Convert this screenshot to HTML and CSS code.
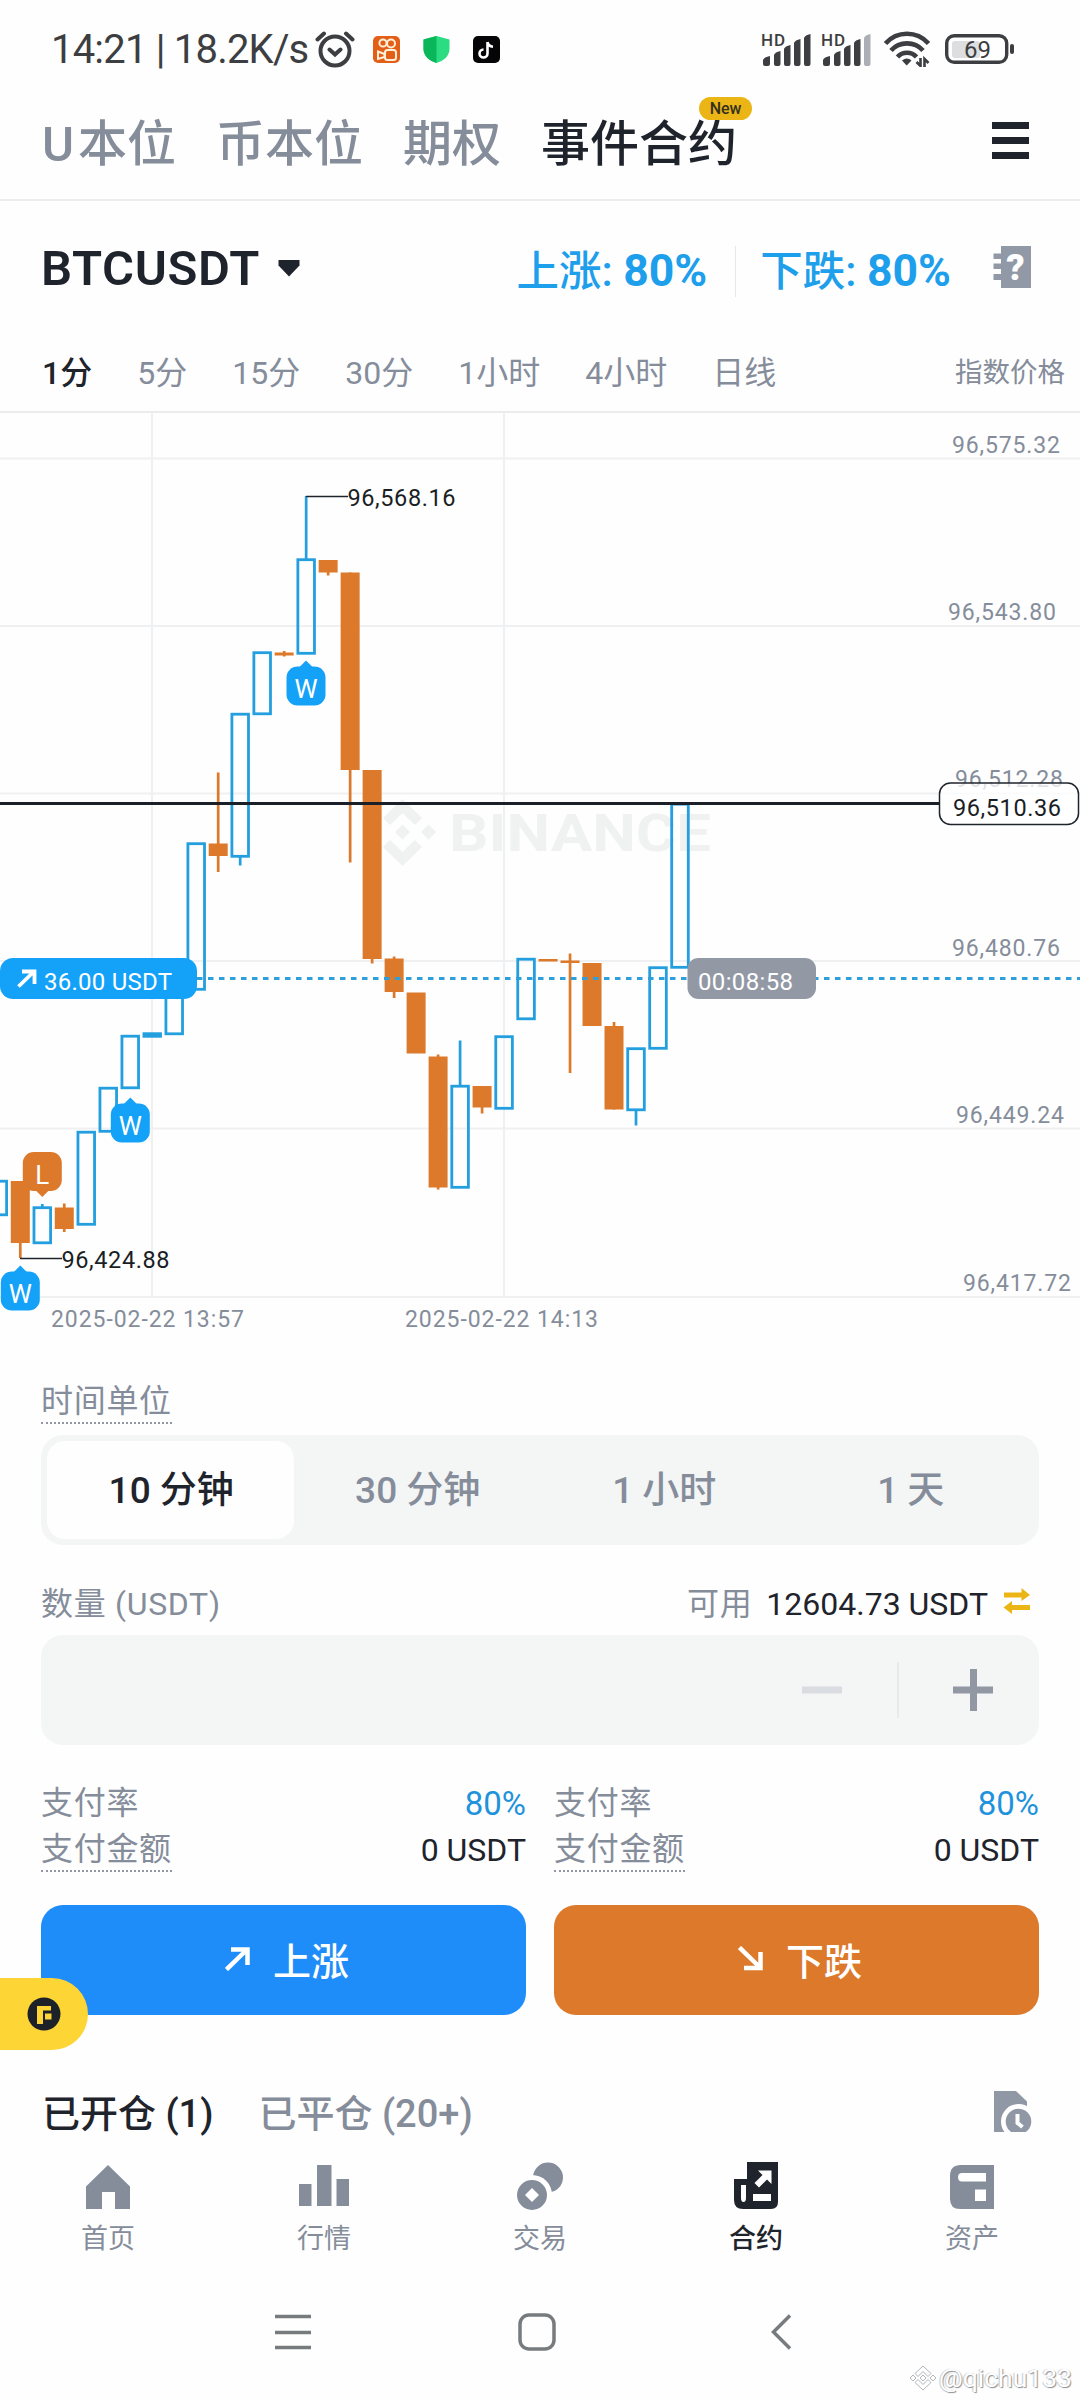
FILE: index.html
```html
<!DOCTYPE html>
<html lang="zh-CN">
<head>
    <meta charset="UTF-8">
    <meta name="viewport" content="width=device-width, initial-scale=1.0">
    <title>事件合约 BTCUSDT</title>
    <link rel="stylesheet" href="styles.css">
</head>
<body>
    <div class="status-bar">
        <span class="status-time">14:21 | 18.2K/s</span>
        <svg class="icon-alarm" width="40" height="38" viewBox="0 0 40 38" fill="none" stroke="#3d3e41" stroke-width="4" stroke-linecap="round">
            <circle cx="20" cy="21" r="14.5"/>
            <path d="M14.5 19.5l5.5 5 5.5-5M2.5 9.5L9 3.5M37.5 9.5L31 3.5"/>
        </svg>
        <svg class="icon-app" width="27" height="27" viewBox="0 0 27 27">
            <rect width="27" height="27" rx="5" fill="#e35f18"/>
            <g fill="none" stroke="#fff0d8" stroke-width="2">
                <circle cx="10" cy="7" r="3.6"/>
                <circle cx="18" cy="7.5" r="4"/>
                <rect x="12" y="14" width="11" height="10" rx="2.5"/>
                <path d="M11.5 18L5 15.5v7.500L11.500 21z"/>
            </g>
        </svg>
        <svg class="icon-app" width="27" height="27" viewBox="0 0 27 27">
            <path d="M13.500 0L26.500 3.500V13c0 7-6 12-13 14C6.500 25 .500 20 .500 13V3.500z" fill="#2bdc82"/>
            <path d="M13.500 0v27C6.500 25 .500 20 .500 13V3.500z" fill="#09b659"/>
        </svg>
        <svg class="icon-app" width="27" height="27" viewBox="0 0 27 27">
            <rect width="27" height="27" rx="5" fill="#050507"/>
            <path d="M14.500 6v11.500a4 4 0 1 1-4-4M14.500 6c.5 3 2.500 4.500 5.500 4.700" fill="none" stroke="#fff" stroke-width="2.600"/>
        </svg>
        <div class="status-right">
            <svg width="52" height="36" viewBox="0 0 52 36" fill="#3d3e41">
                <text class="hd" x="0" y="15" textLength="24">HD</text>
                <path d="M2 33v-4q1-3 7-4v8q0 2-2 2h-3q-2 0-2-2zM13 33v-9q1-3 6.500-4v13q0 2-2 2h-2.500q-2 0-2-2zM23 33v-15q1-3 6.500-4v19q0 2-2 2h-2.500q-2 0-2-2zM33 33v-21q1-3 6.500-4v25q0 2-2 2h-2.500q-2 0-2-2zM43 33v-26q1-3 6.500-4v30q0 2-2 2h-2.500q-2 0-2-2z"/>
            </svg>
            <svg class="signal-2" width="52" height="36" viewBox="0 0 52 36" fill="#3d3e41">
                <text class="hd" x="0" y="15" textLength="24">HD</text>
                <path d="M2 33v-4q1-3 7-4v8q0 2-2 2h-3q-2 0-2-2zM13 33v-9q1-3 6.500-4v13q0 2-2 2h-2.500q-2 0-2-2zM23 33v-15q1-3 6.500-4v19q0 2-2 2h-2.500q-2 0-2-2zM33 33v-21q1-3 6.500-4v25q0 2-2 2h-2.500q-2 0-2-2z"/>
                <path fill="#abaeb4" d="M43 33v-26q1-3 6.500-4v30q0 2-2 2h-2.500q-2 0-2-2z"/>
            </svg>
            <svg class="icon-wifi" width="46" height="36" viewBox="0 0 46 36" fill="none" stroke="#3d3e41" stroke-width="4.600">
                <path d="M1.500 12.500C13-.500 33-.500 44.500 12.500M7 19.500c8.500-9.500 23.500-9.500 32 0M13.500 26c5-5.700 14-5.700 19 0"/>
                <path d="M18 29.500q5-4 9.500 0L22.700 34.500z" fill="#3d3e41" stroke="none"/>
                <path d="M36.500 27v8l-4-4M40.500 36v-8l4 4" stroke-width="2.600"/>
            </svg>
            <svg width="70" height="30" viewBox="0 0 70 30">
                <rect x="7" y="7" width="28" height="17" rx="3" fill="#dcdee0"/>
                <rect x="1.700" y="1.700" width="60" height="26.600" rx="7.500" fill="none" stroke="#3d3e41" stroke-width="3.400"/>
                <rect x="65" y="10" width="4" height="10" rx="2" fill="#3d3e41"/>
                <text x="19" y="23.500" class="battery-text" textLength="27">69</text>
            </svg>
        </div>
    </div>

    <div class="top-nav">
        <span class="top-tab tab-u">U本位</span>
        <span class="top-tab">币本位</span>
        <span class="top-tab">期权</span>
        <span class="top-tab active">事件合约<span class="badge-new">New</span></span>
        <div class="menu"><i></i><i></i><i></i></div>
    </div>

    <div class="pair-row">
        <span class="pair">BTCUSDT</span>
        <svg width="22" height="17" viewBox="0 0 22 17"><path d="M.5 0h21v5.500L11 16.500.5 5.500z" fill="#1f242c"/></svg>
        <div class="rates">
            <span>上涨: <b>80%</b></span>
            <span class="rate-down">下跌: <b>80%</b></span>
        </div>
        <svg class="icon-guide" width="38" height="42" viewBox="0 0 38 42">
            <path d="M8 0h30v42H8v-8H.5v-6H8v-5H.5v-5.500H8V13H.5V7.500H8z" fill="#9299a6"/>
            <text x="22.500" y="34" class="guide-mark">?</text>
        </svg>
    </div>

    <div class="interval-row">
        <span class="interval active">1分</span>
        <span class="interval">5分</span>
        <span class="interval">15分</span>
        <span class="interval">30分</span>
        <span class="interval">1小时</span>
        <span class="interval">4小时</span>
        <span class="interval">日线</span>
        <span class="index-price">指数价格</span>
    </div>

    <svg class="chart" width="1080" height="940" viewBox="0 413 1080 940">
        <path class="grid" d="M0 458.500H1080M0 626H1080M0 793.500H1080M0 961H1080M0 1128.500H1080M0 1297H1080M152 413V1297M504 413V1297"/>
        <g class="brand" fill="#f0f1f1">
            <path d="M402.500 799l19.500 19-7 7-12.500-12-12.500 12-7-7zM402.500 866l19.500-19-7-7-12.500 12-12.500-12-7 7zM402.500 824.500l7.500 7.500-7.500 7.500-7.500-7.500zM428.500 824.500l7.500 7.500-7.500 7.500-7.500-7.500z"/>
            <text class="brand-text" x="449" y="850.500" textLength="262" lengthAdjust="spacingAndGlyphs">BINANCE</text>
        </g>
        <g class="axis">
            <text x="952" y="453" textLength="108">96,575.32</text>
            <text x="948" y="620" textLength="108">96,543.80</text>
            <text x="955" y="787" textLength="108">96,512.28</text>
            <text x="952" y="956" textLength="108">96,480.76</text>
            <text x="956" y="1123" textLength="108">96,449.24</text>
            <text x="963" y="1291" textLength="108">96,417.72</text>
            <text x="51" y="1326.500" textLength="193">2025-02-22 13:57</text>
            <text x="405" y="1326.500" textLength="193">2025-02-22 14:13</text>
        </g>

        <g id="candles"></g>

        <path class="leader" d="M306 496.500H348M20 1258.500H62"/>
        <text class="extreme" x="347.500" y="505.500" textLength="108">96,568.16</text>
        <text class="extreme" x="61.500" y="1267.500" textLength="108">96,424.88</text>

        <path class="price-line" d="M0 803.500H940"/>
        <path class="order-line" d="M197 978.500H1080"/>

        <g id="markers"></g>

        <rect x="0" y="958" width="197" height="41" rx="13" fill="#14a2f8"/>
        <path d="M18.500 986.500L34 971.500M22 971.500H34.500V984" fill="none" stroke="#fff" stroke-width="3.800"/>
        <text class="tag-text" x="44" y="989.500" textLength="128">36.00 USDT</text>
        <rect x="687.500" y="958" width="128.500" height="41" rx="11" fill="#9299a5"/>
        <text class="tag-text" x="698" y="989.500" textLength="95">00:08:58</text>
        <rect x="939.500" y="783" width="139" height="41.500" rx="11" fill="#fff" fill-opacity=".75" stroke="#1f242c" stroke-width="1.500"/>
        <text class="extreme" x="953" y="816" textLength="108">96,510.36</text>
    </svg>

    <div class="form">
        <span class="label dotted">时间单位</span>
        <div class="segment">
            <span class="segment-item active">10 分钟</span>
            <span class="segment-item">30 分钟</span>
            <span class="segment-item">1 小时</span>
            <span class="segment-item">1 天</span>
        </div>

        <div class="amount-head">
            <span class="label">数量 (USDT)</span>
            <span class="available"><span class="label">可用</span> 12604.73 USDT</span>
            <svg width="28" height="26" viewBox="0 0 28 26" fill="#ebb515">
                <path d="M1 4.500h17.500V0L27 7l-8.500 6V9.500H1zM27 17H9v-4L.500 19.500 9 26v-4h18z"/>
            </svg>
        </div>
        <div class="amount-input">
            <svg width="42" height="42" viewBox="0 0 42 42"><path d="M1 17.500h40v7H1z" fill="#d9dce0"/></svg>
            <span class="divider"></span>
            <svg width="42" height="42" viewBox="0 0 42 42"><path d="M1 17.500h17V0h7v17.500h16v7H25V42h-7V24.500H1z" fill="#9198a4"/></svg>
        </div>

        <div class="sides">
            <div class="side">
                <div class="pay-row"><span class="label">支付率</span><span class="pay-rate">80%</span></div>
                <div class="pay-row"><span class="label dotted">支付金额</span><span>0 USDT</span></div>
                <div class="btn btn-up">
                    <svg width="25" height="25" viewBox="0 0 25 25"><path d="M1.500 23.500L21 4.500M6 3.500H22.500V19" fill="none" stroke="#fff" stroke-width="4.500"/></svg>
                    上涨
                </div>
            </div>
            <div class="side">
                <div class="pay-row"><span class="label">支付率</span><span class="pay-rate">80%</span></div>
                <div class="pay-row"><span class="label dotted">支付金额</span><span>0 USDT</span></div>
                <div class="btn btn-down">
                    <svg width="25" height="25" viewBox="0 0 25 25"><path d="M1.500 1.500L21 20.500M6 22H22.500V6" fill="none" stroke="#fff" stroke-width="4.500"/></svg>
                    下跌
                </div>
            </div>
        </div>
    </div>

    <div class="orders">
        <span class="orders-tab active">已开仓 (1)</span>
        <span class="orders-tab">已平仓 (20+)</span>
        <svg width="38" height="41" viewBox="0 0 38 41">
            <path d="M0 0h22l11 10.500V41H0z" fill="#9198a5"/>
            <circle cx="24.500" cy="30.500" r="17.500" fill="#fff"/>
            <circle cx="24.500" cy="30.500" r="12.800" fill="#9198a5"/>
            <path d="M23.500 23v9l5 4" fill="none" stroke="#fff" stroke-width="4"/>
        </svg>
    </div>

    <div class="float-tag">
        <svg width="34" height="34" viewBox="0 0 34 34">
            <circle cx="17" cy="17" r="16.500" fill="#1d2128"/>
            <path d="M10 9h14v4.500h-8V27h-6z" fill="#fdd535"/>
            <path d="M18 16.500h6.500v6H18z" fill="#fdd535"/>
        </svg>
    </div>

    <div class="bottom-nav">
        <div class="nav-item">
            <svg width="50" height="48" viewBox="0 0 50 48"><path d="M25 3l22 21.500V47H32V30H19v17H3V24.500z" fill="#858d9b"/></svg>
            首页
        </div>
        <div class="nav-item">
            <svg width="50" height="48" viewBox="0 0 50 48"><path d="M0 22h12.500v22H0zM18 3h14.500v41H18zM37.500 17H50v27H37.500z" fill="#858d9b"/></svg>
            行情
        </div>
        <div class="nav-item">
            <svg width="50" height="48" viewBox="0 0 50 48">
                <circle cx="33" cy="15.500" r="15" fill="#858d9b"/>
                <circle cx="17" cy="33" r="20" fill="#fff"/>
                <circle cx="17" cy="33" r="15" fill="#858d9b"/>
                <path d="M17 26l7 7-7 7-7-7z" fill="#fff"/>
            </svg>
            交易
        </div>
        <div class="nav-item active">
            <svg width="50" height="48" viewBox="0 0 50 48">
                <path d="M16 0h31v40q0 7-7 7H12q-9 0-9-9V17h13z" fill="#1f242c"/>
                <path d="M10 23h5v13q0 4-2.500 4T10 36zM22 32h18v7H22zM27 8.500h13.500V22l-4.500-4.500-8 8-4.500-4.500 8-8z" fill="#fff"/>
            </svg>
            合约
        </div>
        <div class="nav-item">
            <svg width="50" height="48" viewBox="0 0 50 48">
                <path d="M14 3h33v44H13q-10 0-10-10V14q0-11 11-11z" fill="#858d9b"/>
                <path d="M15 11h24v8.500H15q-4 0-4-4.250T15 11zM28 27.500h11V39H28z" fill="#fff"/>
            </svg>
            资产
        </div>
    </div>

    <div class="system-nav">
        <svg width="40" height="40" viewBox="0 0 40 40"><path d="M2 4.500h36M2 20.500h36M2 35.500h36" stroke="#787b7e" stroke-width="3.500"/></svg>
        <svg width="40" height="40" viewBox="0 0 40 40"><rect x="3" y="3" width="34" height="34" rx="9" fill="none" stroke="#787b7e" stroke-width="3.500"/></svg>
        <svg width="40" height="40" viewBox="0 0 40 40"><path d="M29 3.500L12.500 20 29 36.500" fill="none" stroke="#787b7e" stroke-width="3.500"/></svg>
    </div>

    <div class="author-mark">
        <svg width="28" height="28" viewBox="0 0 28 28" fill="none" stroke="#b4b6b9" stroke-width="1">
            <path d="M14 2l8 7.500-3 3-5-5-5 5-3-3zM14 26l8-7.500-3-3-5 5-5-5-3 3zM14 11l3 3-3 3-3-3zM24 11l3 3-3 3-3-3zM4 11l3 3-3 3-3-3z"/>
        </svg>
        @qichu133
    </div>

    <script src="script.js"></script>
</body>
</html>
```

FILE: styles.css
```css
* {
    margin: 0;
    padding: 0;
    box-sizing: border-box;
}

body {
    position: relative;
    width: 1080px;
    height: 2400px;
    overflow: hidden;
    background: #fefefe;
    color: #1f242c;
    font-family: Roboto, "Noto Sans CJK SC", sans-serif;
}

svg {
    display: block;
    flex: none;
}

/* status bar */
.status-bar {
    display: flex;
    align-items: center;
    height: 98px;
    padding: 0 65px 0 51px;
    color: #3d3e41;
}

.status-time {
    width: 264px;
    font-size: 40px;
    letter-spacing: -0.800px;
    white-space: nowrap;
}

.icon-alarm {
    margin-right: -5px;
}

.icon-app {
    margin-left: 23px;
}

.status-right {
    display: flex;
    align-items: center;
    margin-left: auto;
}

.signal-2 {
    margin-left: 8px;
}

.icon-wifi {
    margin: 0 15px 0 11px;
}

.hd {
    font-size: 17px;
    font-weight: 500;
}

.battery-text {
    font-size: 24px;
    fill: #3d3e41;
}

/* product tabs */
.top-nav {
    display: flex;
    align-items: center;
    gap: 40px;
    height: 103px;
    padding: 0 51px 7px 42px;
    border-bottom: 2px solid #ececed;
}

.top-tab {
    position: relative;
    color: #858d9b;
    font-size: 49px;
    font-weight: 500;
    line-height: 64px;
}

.tab-u {
    width: 134px;
    white-space: nowrap;
}

.tab-u::first-letter {
    letter-spacing: 4px;
}

.active {
    color: #1f242c;
}

.badge-new {
    position: absolute;
    top: -16px;
    right: -15px;
    width: 53px;
    height: 23px;
    border-radius: 12px;
    background: #ebb515;
    color: #33301f;
    font-size: 16px;
    line-height: 23px;
    text-align: center;
}

.menu {
    display: grid;
    gap: 8px;
    width: 37px;
    margin-left: auto;
    margin-top: -10px;
}

.menu i {
    height: 7px;
    background: #1f242c;
}

/* pair */
.pair-row {
    display: flex;
    align-items: center;
    height: 135px;
    padding: 0 49px 0 41px;
}

.pair {
    margin-right: 18px;
    font-size: 49px;
    font-weight: 600;
    letter-spacing: 0.600px;
}

.rates {
    display: flex;
    margin-left: auto;
    padding-top: 5px;
    color: #1e9fec;
    font-size: 42.500px;
    font-weight: 500;
    line-height: 50px;
}

.rates b {
    font-size: 44.500px;
    font-weight: 700;
}

.rate-down {
    margin-left: 28px;
    padding-left: 24px;
    border-left: 1px solid #e6e7e9;
}

.icon-guide {
    margin-left: 42px;
    margin-bottom: 4px;
}

.guide-mark {
    fill: #fff;
    font-size: 36px;
    font-weight: 900;
    text-anchor: middle;
}

/* chart intervals */
.interval-row {
    display: flex;
    align-items: center;
    gap: 45px;
    height: 77px;
    padding: 0 15px 8px 42px;
    border-bottom: 2px solid #ececed;
    color: #858d9b;
    font-size: 32px;
}

.interval.active {
    font-weight: 500;
}

.index-price {
    margin-left: auto;
    font-size: 27.500px;
}

/* chart */
.grid {
    fill: none;
    stroke: #eff0f1;
    stroke-width: 2;
}

.brand-text {
    font-size: 52px;
    font-weight: 700;
}

.axis text {
    fill: #858d9b;
    font-size: 23px;
}

.extreme {
    fill: #1a1e25;
    font-size: 23.500px;
}

.leader {
    stroke: #1f242c;
    stroke-width: 1.500;
}

.price-line {
    stroke: #1b2028;
    stroke-width: 2.800;
}

.order-line {
    stroke: #2d9fdb;
    stroke-width: 3;
    stroke-dasharray: 5.500 5.500;
}

.tag-text {
    fill: #fff;
    font-size: 24px;
}

.marker-text {
    fill: #fff;
    font-size: 26px;
    text-anchor: middle;
}

/* order form */
.form {
    padding: 26px 41px 0;
    font-size: 32px;
}

.label {
    color: #858d9b;
    letter-spacing: 0.700px;
}

.dotted {
    display: block;
    width: fit-content;
    height: 45px;
    line-height: 45px;
    border-bottom: 2px dotted #9198a4;
}

.segment {
    display: grid;
    grid-template-columns: repeat(4, 1fr);
    height: 110px;
    margin-top: 11px;
    padding: 6px;
    border-radius: 22px;
    background: #f4f5f5;
}

.segment-item {
    padding-top: 2px;
    padding-left: 2px;
    border-radius: 18px;
    color: #858d9b;
    font-size: 37px;
    font-weight: 500;
    line-height: 96px;
    text-align: center;
}

.segment-item.active {
    background: #fefefe;
    color: #1f242c;
}

.amount-head {
    display: flex;
    align-items: center;
    height: 90px;
    padding: 21px 8px 0 0;
}

.available {
    margin-left: auto;
    margin-right: 15px;
}

.available .label {
    margin-right: 6px;
}

.amount-input {
    display: flex;
    align-items: center;
    justify-content: flex-end;
    height: 110px;
    padding-right: 45px;
    border-radius: 22px;
    background: #f4f5f5;
}

.divider {
    width: 2px;
    height: 56px;
    margin: 0 53px 0 54px;
    background: #e7e9eb;
}

.sides {
    display: grid;
    grid-template-columns: 1fr 1fr;
    gap: 28px;
    padding-top: 35px;
}

.pay-row {
    display: flex;
    justify-content: space-between;
    height: 47px;
    line-height: 47px;
}

.pay-rate {
    color: #1e93dc;
    font-size: 33px;
}

.btn {
    display: flex;
    align-items: center;
    justify-content: center;
    gap: 23px;
    height: 110px;
    margin-top: 31px;
    padding-left: 7px;
    padding-bottom: 3px;
    border-radius: 22px;
    color: #fff;
    font-size: 38px;
    font-weight: 500;
}

.btn-up {
    background: #1e8dfa;
}

.btn-down {
    background: #dc792b;
}

/* positions */
.orders {
    display: flex;
    align-items: flex-end;
    height: 117px;
    padding: 0 48px 0 42px;
}

.orders-tab {
    margin-right: 45px;
    color: #858d9b;
    font-size: 38px;
    font-weight: 500;
    line-height: 35px;
}

.orders-tab.active {
    color: #1f242c;
}

.orders svg {
    margin-left: auto;
}

.float-tag {
    position: absolute;
    top: 1978px;
    left: 0;
    width: 88px;
    height: 72px;
    padding: 19px 27px;
    border-radius: 0 36px 36px 0;
    background: #fdd535;
}

/* bottom bars */
.bottom-nav {
    display: grid;
    grid-template-columns: repeat(5, 1fr);
    height: 148px;
    padding-top: 30px;
}

.nav-item {
    display: flex;
    flex-direction: column;
    align-items: center;
    gap: 11px;
    color: #858d9b;
    font-size: 27px;
    line-height: 36px;
}

.nav-item.active {
    color: #1f242c;
    font-weight: 500;
}

.system-nav {
    display: flex;
    justify-content: center;
    gap: 204px;
    padding-top: 32px;
    padding-right: 7px;
}

.author-mark {
    position: absolute;
    right: 8px;
    bottom: 6px;
    display: flex;
    align-items: center;
    gap: 2px;
    color: #fff;
    font-size: 26.500px;
    line-height: 32px;
    text-shadow: 1px 1px 1px #8b8e92, -1px 0 1px #c8cacc;
}
```

FILE: script.js
```js
// direction, body top, body bottom, wick top, wick bottom
const candles = [
    ['up', 1180, 1216], ['down', 1181, 1243, 1181, 1258],
    ['up', 1206.5, 1244, 1204, 1207], ['down', 1207.5, 1229, 1203.5, 1232],
    ['up', 1131, 1225.5], ['up', 1087, 1132.5], ['up', 1035, 1089],
    ['up', 1032.5, 1037.5], ['up', 990, 1035], ['up', 842.5, 990.5],
    ['down', 843.5, 856, 772.5, 872], ['up', 713, 857.5, 857, 865.5],
    ['up', 651.5, 715], ['down', 652.5, 655.5, 651, 656.5],
    ['up', 558.5, 654.5, 496, 559], ['down', 560, 572.5, 560, 575.5],
    ['down', 572.5, 770, 572.5, 862.5], ['down', 770, 959, 770, 963.5],
    ['down', 958.5, 992, 956.5, 998], ['down', 992.5, 1053.5],
    ['down', 1056.5, 1187.5, 1054.5, 1189.5], ['up', 1085, 1188.5, 1040.5, 1086],
    ['down', 1086, 1107.5, 1086, 1113.5], ['up', 1035.5, 1109.5],
    ['up', 958, 1020], ['down', 959, 961.5], ['down', 960.5, 963, 953.5, 1073],
    ['down', 963, 1026], ['down', 1026, 1109.5, 1022, 1109.5],
    ['up', 1047.5, 1111, 1110, 1125.5], ['up', 966.5, 1049.5], ['up', 803, 968.5]
];

// win / lose flags: label, x, tip y
const markers = [['W', 306, 660.5], ['W', 130.3, 1097.5], ['W', 20.3, 1265.5], ['L', 42.3, 1197]];

const startX = -1.7;
const step = 21.99;
const bodyWidth = 19;

document.getElementById('candles').innerHTML = candles.map(([dir, top, bottom, high, low], i) => {
    const x = startX + i * step;
    const color = dir === 'up' ? '#239edf' : '#dc792b';
    let svg = '';
    if (high) {
        svg += `<path d="M${x} ${high}V${low}" stroke="${color}" stroke-width="2.7"/>`;
    }
    if (dir === 'up') {
        svg += `<rect x="${x - bodyWidth / 2 + 1.2}" y="${top + 1.2}" width="${bodyWidth - 2.4}" height="${bottom - top - 2.4}" fill="none" stroke="${color}" stroke-width="2.8"/>`;
    } else {
        svg += `<rect x="${x - bodyWidth / 2}" y="${top}" width="${bodyWidth}" height="${bottom - top}" fill="${color}"/>`;
    }
    return svg;
}).join('');

document.getElementById('markers').innerHTML = markers.map(([label, x, tip]) => {
    const win = label === 'W';
    const color = win ? '#14a2f8' : '#dc792b';
    const boxTop = win ? tip + 6 : tip - 45;
    const base = win ? tip + 8 : tip - 8;
    return `<path d="M${x} ${tip}L${x - 8} ${base}H${x + 8}z" fill="${color}"/>
        <rect x="${x - 19.5}" y="${boxTop}" width="39" height="39" rx="11" fill="${color}"/>
        <text class="marker-text" x="${x}" y="${boxTop + 31.5}">${label}</text>`;
}).join('');
```
